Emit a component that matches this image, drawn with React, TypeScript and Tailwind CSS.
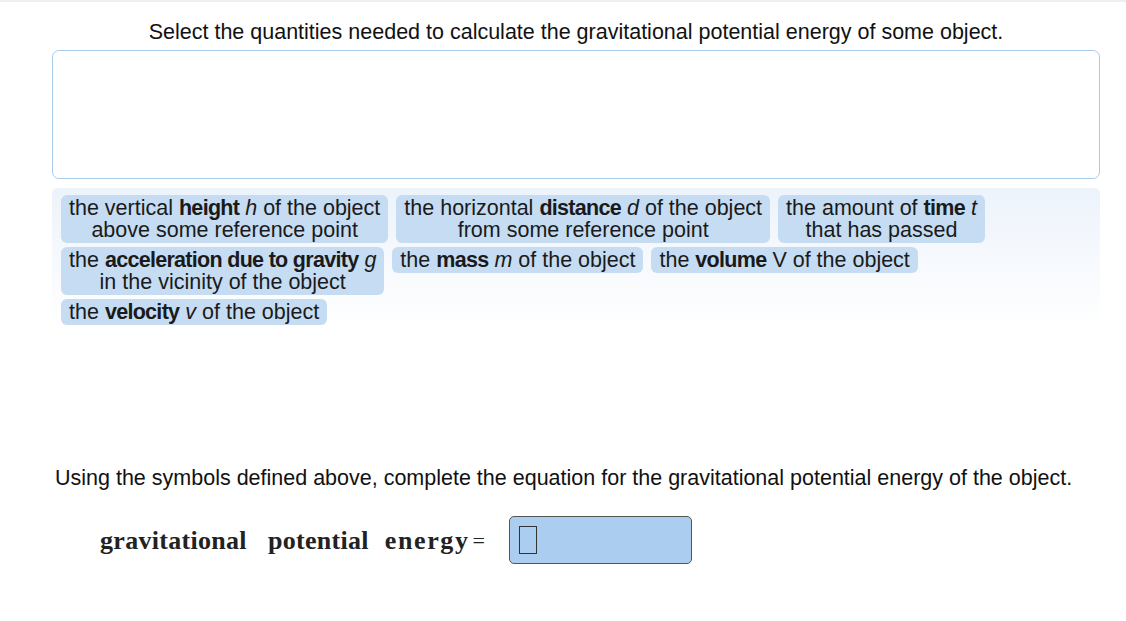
import { ReactNode } from 'react'

// one draggable quantity tile in the palette
function Chip({ children }: { children: ReactNode }) {
  return (
    <div className="rounded-[6px] bg-[#c5dcf2] px-[8px] py-[2px] text-center text-[21.5px] leading-[22px] text-[#1a1a1a]">
      {children}
    </div>
  )
}

function B({ children }: { children: ReactNode }) {
  return <span className="font-bold tracking-[-0.7px]">{children}</span>
}

function V({ children }: { children: ReactNode }) {
  return <span className="italic">{children}</span>
}

export default function App() {
  return (
    <div className="h-[621px] w-[1126px] overflow-hidden border-t-2 border-[#efefef] bg-white font-['Liberation_Sans',Arial,sans-serif] text-[#111]">
      <div className="w-[1100px] pl-[52px]">
        <p className="pt-[18px] text-center text-[21.5px] leading-[24px]">
          Select the quantities needed to calculate the gravitational potential energy of some object.
        </p>

        {/* drop target */}
        <div className="mt-[6px] h-[129px] rounded-[7px] border border-[#a9cbec] bg-white" />

        {/* palette of quantities */}
        <div className="mt-[9px] flex h-[140px] flex-wrap content-start items-start gap-x-[8px] gap-y-[4px] rounded-[5px] bg-gradient-to-b from-[#edf3fb] to-white px-[9px] pt-[7px]">
          <Chip>
            the vertical <B>height</B> <V>h</V> of the object
            <br />
            above some reference point
          </Chip>
          <Chip>
            the horizontal <B>distance</B> <V>d</V> of the object
            <br />
            from some reference point
          </Chip>
          <Chip>
            the amount of <B>time</B> <V>t</V>
            <br />
            that has passed
          </Chip>
          <Chip>
            the <B>acceleration due to gravity</B> <V>g</V>
            <br />
            in the vicinity of the object
          </Chip>
          <Chip>
            the <B>mass</B> <V>m</V> of the object
          </Chip>
          <Chip>
            the <B>volume</B> V of the object
          </Chip>
          <Chip>
            the <B>velocity</B> <V>v</V> of the object
          </Chip>
        </div>

        <p className="mt-[138px] pl-[3px] text-[21.5px] leading-[24px]">
          Using the symbols defined above, complete the equation for the gravitational potential energy of the object.
        </p>

        <div className="mt-[26px] flex items-center pl-[48px] font-['Liberation_Serif','Times_New_Roman',serif] text-[#222]">
          <span className="text-[26px] font-bold tracking-[0.3px]">gravitational</span>
          <span className="ml-[21px] text-[26px] font-bold tracking-[0.3px]">potential</span>
          <span className="ml-[16px] text-[26px] font-bold tracking-[1.6px]">energy</span>
          <span className="ml-[3px] text-[22px]">=</span>
          <div className="ml-[24px] flex h-[48px] w-[183px] items-center rounded-[5px] border border-[#555] bg-[#abcdf0] pl-[9px]">
            <div className="h-[28px] w-[18px] border border-[#333]" />
          </div>
        </div>
      </div>
    </div>
  )
}
